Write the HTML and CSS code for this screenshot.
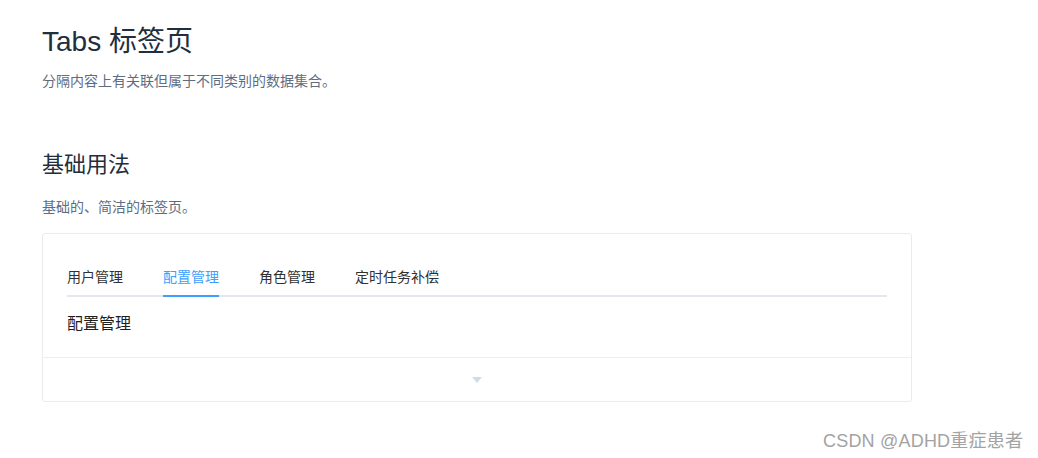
FILE: index.html
```html
<!DOCTYPE html>
<html lang="zh">
<head>
<meta charset="utf-8">
<title>Tabs 标签页</title>
<link rel="stylesheet" href="styles.css">
</head>
<body>
<main class="page">
  <h2 class="title">Tabs 标签页</h2>
  <p class="lead">分隔内容上有关联但属于不同类别的数据集合。</p>
  <h3 class="section">基础用法</h3>
  <p class="desc">基础的、简洁的标签页。</p>
  <div class="demo">
    <div class="demo-source">
      <div class="tabs-header">
        <div class="tab">用户管理</div>
        <div class="tab active">配置管理</div>
        <div class="tab">角色管理</div>
        <div class="tab">定时任务补偿</div>
      </div>
      <div class="tab-pane">配置管理</div>
    </div>
    <div class="demo-control">
      <svg class="caret" width="10" height="6" viewBox="0 0 10 6"><path d="M0 0 H10 L5 6 Z" fill="#d3dce6"/></svg>
    </div>
  </div>
</main>
<div class="watermark">CSDN @ADHD重症患者</div>
</body>
</html>
```

FILE: styles.css
```css
html, body {
  margin: 0;
  padding: 0;
  background: #fff;
}
body {
  font-family: "Liberation Sans", "Noto Sans CJK SC", sans-serif;
  width: 1038px;
  height: 458px;
  overflow: hidden;
}
.page {
  padding: 0 42px;
  width: 870px;
}
.title {
  margin: 0;
  padding-top: 26px;
  font-size: 28px;
  font-weight: 400;
  line-height: 32px;
  color: #1f2f3d;
}
.lead {
  margin: 13px 0 0;
  font-size: 14px;
  line-height: 20px;
  color: #5e6d82;
}
.section {
  margin: 60px 0 0;
  font-size: 22px;
  font-weight: 400;
  line-height: 28px;
  color: #1f2f3d;
}
.desc {
  margin: 18px 0 0;
  font-size: 14px;
  line-height: 20px;
  color: #5e6d82;
}
.demo {
  margin-top: 16px;
  border: 1px solid #ebebeb;
  border-radius: 3px;
  box-sizing: border-box;
  width: 870px;
}
.demo-source {
  padding: 23px 24px 21px;
}
.tabs-header {
  display: flex;
  height: 40px;
  position: relative;
  margin-bottom: 15px;
}
.tabs-header::after {
  content: "";
  position: absolute;
  left: 0;
  right: 0;
  bottom: 0;
  height: 2px;
  background: #e4e7ed;
}
.tab {
  padding: 0 20px;
  height: 40px;
  line-height: 40px;
  font-size: 14px;
  color: #303133;
  position: relative;
  box-sizing: border-box;
}
.tab:first-child {
  padding-left: 0;
}
.tab.active {
  color: #409eff;
}
.tab.active::after {
  content: "";
  position: absolute;
  left: 20px;
  right: 20px;
  bottom: 0;
  height: 2px;
  background: #409eff;
  z-index: 1;
}
.tab-pane {
  font-size: 16px;
  line-height: 24px;
  color: #1f1f1f;
}
.demo-control {
  border-top: 1px solid #eaeefb;
  height: 43px;
  display: flex;
  align-items: center;
  justify-content: center;
}
.caret {
  display: block;
  margin-top: 1px;
}
.watermark {
  position: absolute;
  left: 823px;
  top: 430px;
  font-size: 18px;
  letter-spacing: 0.2px;
  line-height: 22px;
  color: #a3a3a3;
  font-family: "Liberation Sans", "Noto Sans CJK SC", sans-serif;
  text-shadow: 0 0 1px #fff;
}
```
